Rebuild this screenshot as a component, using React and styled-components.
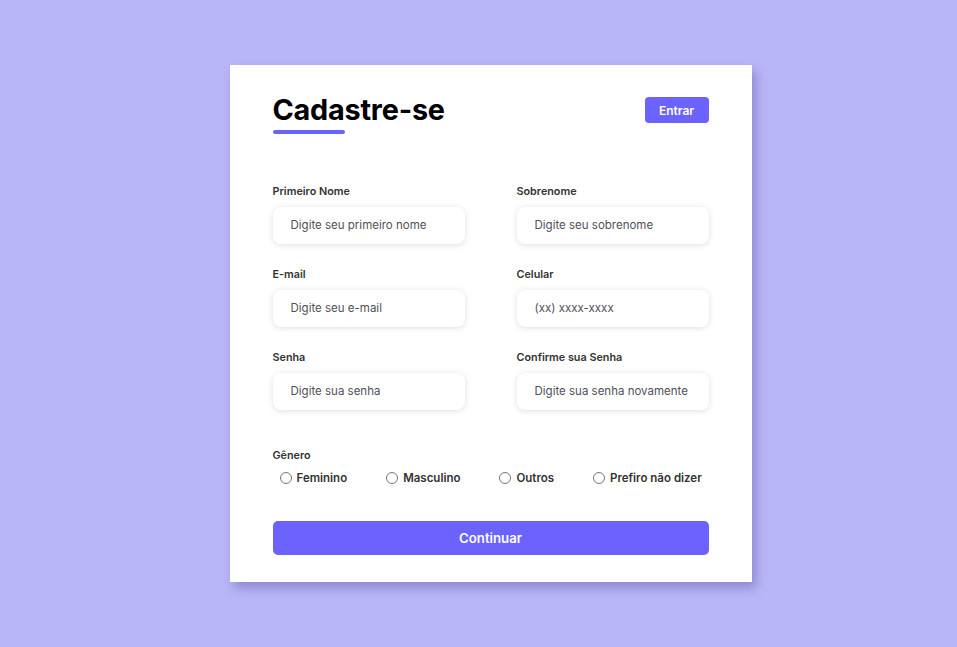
import React from 'react'
import styled, { createGlobalStyle } from 'styled-components'

const GlobalStyle = createGlobalStyle`
    * { box-sizing : border-box; }
    body {
        margin : 0;
        background : #b8b6f7;
        font-family : Inter, "Noto Sans", sans-serif;
    }
`

const Page = styled.div`
    min-height : 647px;
    display : flex;
    justify-content : center;
    padding : 65px 0 0 24px;
`

const Card = styled.div`
    width : 522px;
    height : 517px;
    background : #fff;
    padding : 30px 43px 0;
    box-shadow : 4px 6px 10px rgba(60, 55, 140, 0.35);
`

const Header = styled.div`
    display : flex;
    justify-content : space-between;
    align-items : flex-start;
`

const TitleBox = styled.div`
    display : flex;
    flex-direction : column;
`

const Title = styled.h1`
    margin : 0;
    font-size : 28.8px;
    line-height : 30px;
    font-weight : 700;
    color : #000;
    letter-spacing : -0.2px;
`

const Underline = styled.div`
    width : 72px;
    height : 4px;
    border-radius : 2px;
    background : #6c63ff;
    margin-top : 5px;
`

const SmallButton = styled.button`
    margin-top : 2px;
    width : 64px;
    height : 26px;
    border : none;
    border-radius : 4px;
    background : #6c63ff;
    color : #fff;
    font-family : inherit;
    font-size : 12px;
    font-weight : 600;
`

const Grid = styled.div`
    display : grid;
    grid-template-columns : 192px 192px;
    column-gap : 52px;
    row-gap : 24px;
    margin-top : 51px;
`

const Field = styled.div`
    display : flex;
    flex-direction : column;
    gap : 8px;
`

const Label = styled.label`
    font-size : 10.8px;
    line-height : 14px;
    font-weight : 600;
    color : #333;
`

const Input = styled.input`
    height : 37px;
    border : none;
    border-radius : 8px;
    padding : 0 18px 2px;
    font-family : inherit;
    font-size : 11.5px;
    color : #333;
    background : #fff;
    box-shadow : 0 1px 6px rgba(0, 0, 0, 0.13);
    outline : none;
    &::placeholder { color : #50505a; }
`

const Gender = styled.div`
    margin-top : 39px;
    display : flex;
    flex-direction : column;
    gap : 8px;
`

const Options = styled.div`
    display : flex;
    gap : 39px;
    padding-left : 7px;
`

const Option = styled.label`
    display : flex;
    align-items : center;
    gap : 5px;
    font-size : 11.5px;
    line-height : 14px;
    font-weight : 600;
    color : #333;
    white-space : nowrap;
`

const Circle = styled.span`
    width : 12px;
    height : 12px;
    border-radius : 50%;
    border : 1px solid #777;
    background : #fff;
`

const MainButton = styled.button`
    margin-top : 36px;
    width : 100%;
    height : 34px;
    border : none;
    border-radius : 5px;
    background : #6c63ff;
    color : #fff;
    font-family : inherit;
    font-size : 13.2px;
    font-weight : 600;
`

const fields = [
    ['Primeiro Nome', 'Digite seu primeiro nome'],
    ['Sobrenome', 'Digite seu sobrenome'],
    ['E-mail', 'Digite seu e-mail'],
    ['Celular', '(xx) xxxx-xxxx'],
    ['Senha', 'Digite sua senha'],
    ['Confirme sua Senha', 'Digite sua senha novamente'],
]

const genders = ['Feminino', 'Masculino', 'Outros', 'Prefiro não dizer']

export default function App() {
  return (
    <>
      <GlobalStyle />
      <Page>
        <Card>
          <Header>
            <TitleBox>
              <Title>Cadastre-se</Title>
              <Underline />
            </TitleBox>
            <SmallButton>Entrar</SmallButton>
          </Header>
          <Grid>
            {fields.map(([label, ph]) => (
              <Field key={label}>
                <Label>{label}</Label>
                <Input placeholder={ph} />
              </Field>
            ))}
          </Grid>
          <Gender>
            <Label>Gênero</Label>
            <Options>
              {genders.map(g => (
                <Option key={g}><Circle />{g}</Option>
              ))}
            </Options>
          </Gender>
          <MainButton>Continuar</MainButton>
        </Card>
      </Page>
    </>
  )
}
